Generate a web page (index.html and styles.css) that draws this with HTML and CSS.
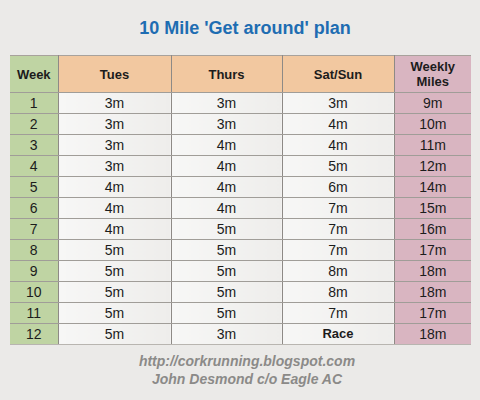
FILE: index.html
```html
<!DOCTYPE html>
<html>
<head>
<meta charset="utf-8">
<link rel="stylesheet" href="styles.css">
</head>
<body>
<div class="page">
  <h1 class="title">10 Mile 'Get around' plan</h1>
  <table class="plan">
    <colgroup>
      <col class="c-week"><col class="c-tues"><col class="c-thurs"><col class="c-sat"><col class="c-miles">
    </colgroup>
    <thead>
      <tr>
        <th class="week">Week</th>
        <th class="day">Tues</th>
        <th class="day">Thurs</th>
        <th class="day">Sat/Sun</th>
        <th class="miles">Weekly<br>Miles</th>
      </tr>
    </thead>
    <tbody>
      <tr><td class="week">1</td><td>3m</td><td>3m</td><td>3m</td><td class="miles">9m</td></tr>
      <tr><td class="week">2</td><td>3m</td><td>3m</td><td>4m</td><td class="miles">10m</td></tr>
      <tr><td class="week">3</td><td>3m</td><td>4m</td><td>4m</td><td class="miles">11m</td></tr>
      <tr><td class="week">4</td><td>3m</td><td>4m</td><td>5m</td><td class="miles">12m</td></tr>
      <tr><td class="week">5</td><td>4m</td><td>4m</td><td>6m</td><td class="miles">14m</td></tr>
      <tr><td class="week">6</td><td>4m</td><td>4m</td><td>7m</td><td class="miles">15m</td></tr>
      <tr><td class="week">7</td><td>4m</td><td>5m</td><td>7m</td><td class="miles">16m</td></tr>
      <tr><td class="week">8</td><td>5m</td><td>5m</td><td>7m</td><td class="miles">17m</td></tr>
      <tr><td class="week">9</td><td>5m</td><td>5m</td><td>8m</td><td class="miles">18m</td></tr>
      <tr><td class="week">10</td><td>5m</td><td>5m</td><td>8m</td><td class="miles">18m</td></tr>
      <tr><td class="week">11</td><td>5m</td><td>5m</td><td>7m</td><td class="miles">17m</td></tr>
      <tr><td class="week">12</td><td>5m</td><td>3m</td><td class="race">Race</td><td class="miles">18m</td></tr>
    </tbody>
  </table>
  <p class="credit">http://corkrunning.blogspot.com<br>John Desmond c/o Eagle AC</p>
</div>
</body>
</html>
```

FILE: styles.css
```css
html, body {
  margin: 0;
  padding: 0;
}
body {
  background: #ebeae8;
  font-family: "Liberation Sans", Arial, sans-serif;
  width: 480px;
  height: 400px;
  overflow: hidden;
}
.page {
  padding-top: 19px;
}
.title {
  margin: 0 0 17px 0;
  padding-left: 10px;
  text-align: center;
  font-size: 18px;
  line-height: 19px;
  font-weight: bold;
  color: #1e6db2;
}
.plan {
  margin-left: 10px;
  width: 461px;
  border-collapse: collapse;
  table-layout: fixed;
  font-size: 13px;
  color: #1c1c1c;
}
.c-week { width: 48px; }
.c-tues { width: 113px; }
.c-thurs { width: 111px; }
.c-sat { width: 112px; }
.c-miles { width: 77px; }
.plan th, .plan td {
  padding: 0;
  text-align: center;
  border: 1px solid #a09d98;
  border-left-color: #8e8a86;
  border-right-color: #8e8a86;
}
.plan th {
  height: 36px;
  font-weight: bold;
  line-height: 15px;
  background: #f2c8a0;
  border-top-color: #a8a29c;
}
.plan td {
  height: 20px;
  font-size: 14px;
  line-height: 20px;
  background: linear-gradient(to right, #f7f7f6, #eeedeb);
}
.plan th.week, .plan td.week {
  background: #bfd4a3;
  border-left: none;
}
.plan th.miles, .plan td.miles {
  background: #d9b5c1;
  border-right: none;
}
.plan td.race {
  font-size: 13px;
  font-weight: bold;
}
.plan tbody tr:last-child td {
  border-bottom: 1px solid #b8b5b0;
}
.credit {
  margin: 7px 0 0 0;
  padding-left: 14px;
  text-align: center;
  font-size: 14px;
  line-height: 18px;
  font-weight: bold;
  font-style: italic;
  color: #8b8a88;
}
```
